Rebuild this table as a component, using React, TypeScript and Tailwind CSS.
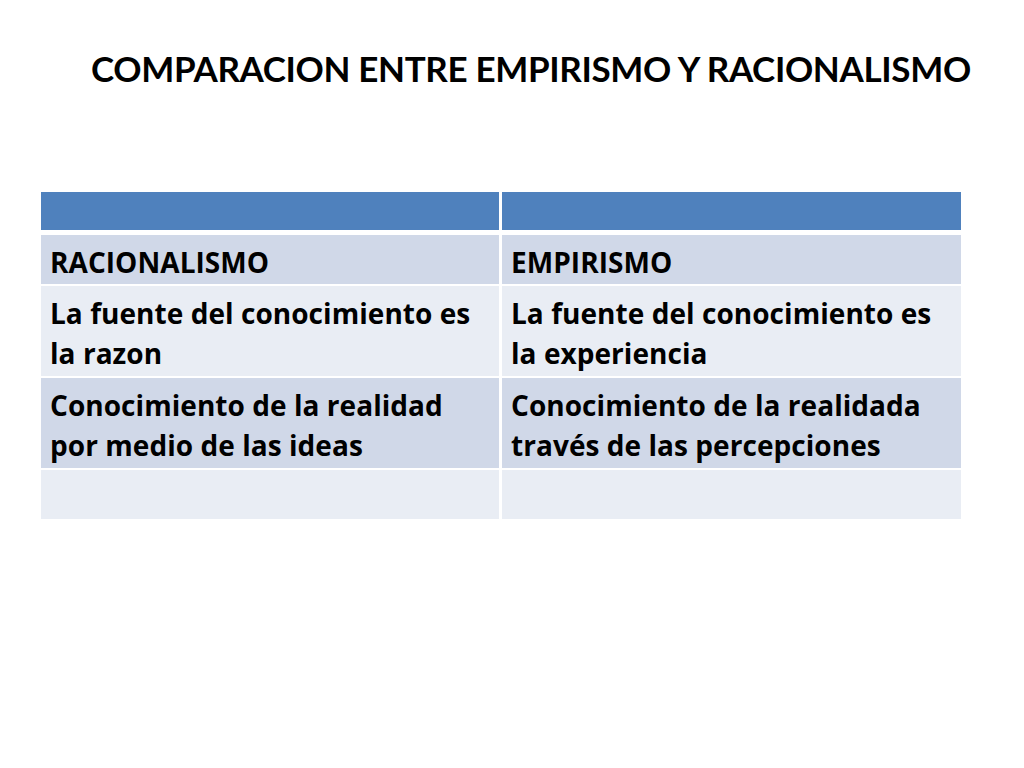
const rows = [
  { left: "RACIONALISMO", right: "EMPIRISMO", tone: "dark", h: "h-[49px]" },
  {
    left: "La fuente del conocimiento es la razon",
    right: "La fuente del conocimiento es la experiencia",
    tone: "light",
    h: "h-[90px]",
  },
  {
    left: "Conocimiento de la realidad por medio de las ideas",
    right: "Conocimiento de la realidada través de las percepciones",
    tone: "dark",
    h: "h-[90px]",
  },
  { left: "", right: "", tone: "light", h: "h-[49px]" },
];

export default function App() {
  return (
    <div className="w-[1024px] h-[768px] bg-white text-black">
      {/* Title */}
      <div className="pt-[46px] pl-[91px] h-[192px]">
        <h1
          className="text-[35px] leading-[44px] font-bold tracking-[-0.35px]"
          style={{ fontFamily: "Lato, 'Open Sans', sans-serif" }}
        >
          COMPARACION ENTRE EMPIRISMO Y RACIONALISMO
        </h1>
      </div>

      {/* Table */}
      <div
        className="ml-[41px] w-[920px] flex flex-col"
        style={{ fontFamily: "'Open Sans', Lato, sans-serif" }}
      >
        <div className="grid grid-cols-[458px_3px_459px] h-[38px]">
          <div className="bg-[#4f81bd]" />
          <div className="bg-white" />
          <div className="bg-[#4f81bd]" />
        </div>
        <div className="h-[5px] bg-white" />
        {rows.map((r, i) => (
          <div key={i} className="flex flex-col">
            <div className={`grid grid-cols-[458px_3px_459px] ${r.h}`}>
              <div
                className={`${r.tone === "dark" ? "bg-[#d0d8e8]" : "bg-[#e9edf4]"} pl-[9px] pr-[22px] pt-[7px] text-[28px] leading-[40px] font-bold tracking-[0.05px]`}
              >
                {r.left}
              </div>
              <div className="bg-white" />
              <div
                className={`${r.tone === "dark" ? "bg-[#d0d8e8]" : "bg-[#e9edf4]"} pl-[9px] pr-[22px] pt-[7px] text-[28px] leading-[40px] font-bold tracking-[0.05px]`}
              >
                {r.right}
              </div>
            </div>
            {i < rows.length - 1 && <div className="h-[2px] bg-white" />}
          </div>
        ))}
      </div>
    </div>
  );
}
